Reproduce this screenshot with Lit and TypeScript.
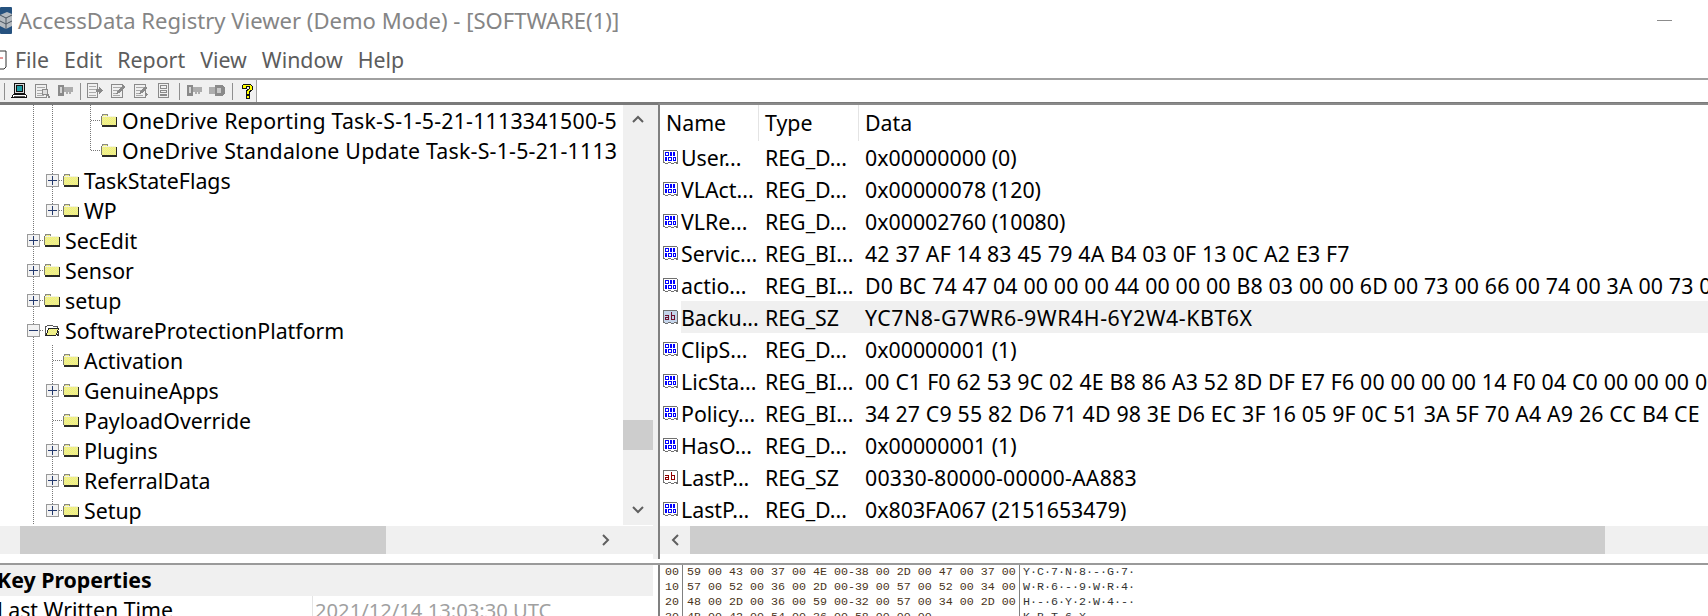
import { LitElement, html, css, svg } from "lit";
import { customElement } from "lit/decorators.js";

type Cell = "" | "v" | "t" | "l" | "p" | "m" | "pl";
const tree: { c: Cell[]; t: string; open?: boolean; wide?: boolean }[] = [
  { c: ["v", "v", "", "t"], t: "OneDrive Reporting Task-S-1-5-21-1113341500-5", wide: true },
  { c: ["v", "v", "", "l"], t: "OneDrive Standalone Update Task-S-1-5-21-1113", wide: true },
  { c: ["v", "p"], t: "TaskStateFlags" },
  { c: ["v", "pl"], t: "WP" },
  { c: ["p"], t: "SecEdit" },
  { c: ["p"], t: "Sensor" },
  { c: ["p"], t: "setup" },
  { c: ["m"], t: "SoftwareProtectionPlatform", open: true },
  { c: ["v", "t"], t: "Activation" },
  { c: ["v", "p"], t: "GenuineApps" },
  { c: ["v", "t"], t: "PayloadOverride" },
  { c: ["v", "p"], t: "Plugins" },
  { c: ["v", "p"], t: "ReferralData" },
  { c: ["v", "pl"], t: "Setup" },
];

const rows: { i: "b" | "s"; n: string; ty: string; d: string; sel?: boolean; ls?: number }[] = [
  { i: "b", n: "User...", ty: "REG_D...", d: "0x00000000 (0)" },
  { i: "b", n: "VLAct...", ty: "REG_D...", d: "0x00000078 (120)" },
  { i: "b", n: "VLRe...", ty: "REG_D...", d: "0x00002760 (10080)" },
  { i: "b", n: "Servic...", ty: "REG_BI...", d: "42 37 AF 14 83 45 79 4A B4 03 0F 13 0C A2 E3 F7", ls: 0.16 },
  { i: "b", n: "actio...", ty: "REG_BI...", d: "D0 BC 74 47 04 00 00 00 44 00 00 00 B8 03 00 00 6D 00 73 00 66 00 74 00 3A 00 73 00", ls: 0.16 },
  { i: "s", n: "Backu...", ty: "REG_SZ", d: "YC7N8-G7WR6-9WR4H-6Y2W4-KBT6X", sel: true, ls: 0.55 },
  { i: "b", n: "ClipS...", ty: "REG_D...", d: "0x00000001 (1)" },
  { i: "b", n: "LicSta...", ty: "REG_BI...", d: "00 C1 F0 62 53 9C 02 4E B8 86 A3 52 8D DF E7 F6 00 00 00 00 14 F0 04 C0 00 00 00 00", ls: 0.16 },
  { i: "b", n: "Policy...", ty: "REG_BI...", d: "34 27 C9 55 82 D6 71 4D 98 3E D6 EC 3F 16 05 9F 0C 51 3A 5F 70 A4 A9 26 CC B4 CE", ls: 0.16 },
  { i: "b", n: "HasO...", ty: "REG_D...", d: "0x00000001 (1)" },
  { i: "s", n: "LastP...", ty: "REG_SZ", d: "00330-80000-00000-AA883", ls: 0.19 },
  { i: "b", n: "LastP...", ty: "REG_D...", d: "0x803FA067 (2151653479)" },
];

const hex = [
  ["00", "59 00 43 00 37 00 4E 00-38 00 2D 00 47 00 37 00", "Y·C·7·N·8·-·G·7·"],
  ["10", "57 00 52 00 36 00 2D 00-39 00 57 00 52 00 34 00", "W·R·6·-·9·W·R·4·"],
  ["20", "48 00 2D 00 36 00 59 00-32 00 57 00 34 00 2D 00", "H·-·6·Y·2·W·4·-·"],
  ["30", "4B 00 42 00 54 00 36 00-58 00 00 00", "K·B·T·6·X···"],
];

const folder = (open?: boolean) => html`<svg class="folder" width="16" height="14" viewBox="0 0 16 14" shape-rendering="crispEdges">
  <defs><pattern id="dith" width="2" height="2" patternUnits="userSpaceOnUse"><rect width="2" height="2" fill="#ffff70"/><rect width="1" height="1" fill="#e0e0a0"/><rect x="1" y="1" width="1" height="1" fill="#e0e0a0"/></pattern></defs>
  ${open
    ? svg`<path d="M1 3h2l1-1h4l1 1h4v2H5L2 12H1z" fill="#fff" stroke="#555"/><path d="M5 5h10l-3 7H2z" fill="url(#dith)" stroke="#222"/><path d="M3 13h10l2-6v6z" fill="#333"/>`
    : svg`<path d="M1 3V2l1-1h4l1 2h8v9H1z" fill="url(#dith)"/><path d="M1 3V2l1-1h4l1 2h8" fill="none" stroke="#8a8a80"/><path d="M1 3h14v1H1z" fill="#f2f2e2"/><path d="M0 3h1v9H0z" fill="#7a7a70"/><path d="M1 12h15v1.5H1zM15 4h1v9h-1z" fill="#2a2a24"/>`}
</svg>`;

const regIcon = (k: "b" | "s", sel?: boolean) => html`<svg class="reg" width="16" height="17" viewBox="0 0 16 17" shape-rendering="crispEdges">
  <path d="M0.5 1.5h13l1 1v12l-2-1-3 1-3-1-3 1-3-1z" fill="${sel ? "#c4d4ea" : "#fff"}" stroke="#707070"/>
  ${k === "b"
    ? svg`<path fill="#0000ff" d="M2 3h4v1H2zM2 6h4v1H2zM2 4h1v2H2zM5 4h1v2H5zM7 3h2v4H7zM10 3h2v4h-2zM2 8h2v4H2zM5 8h4v1H5zM5 11h4v1H5zM5 9h1v2H5zM8 9h1v2H8zM10 8h3v1h-3zM10 11h3v1h-3zM10 9h1v2h-1zM12 9h1v2h-1z"/>`
    : svg`<path fill="${sel ? "#6e1030" : "#900000"}" d="M2 6h4v1H2zM2 8h3V7h1v4H2zM3 9v1h2V9zM8 3h1v3h3v5H8zM9 7v3h2V7z"/>`}
</svg>`;

const gray = "#8a8a8a";
const key = svg`<path d="M1 2h6v11H1z" fill="${gray}"/><path d="M7 4h9v5h-2v2h-2V9h-1v2H9V9H7z" fill="#adadad"/><path d="M3 4h2v6H3z" fill="#d4d4d4"/>`;
const docLines = svg`<path d="M1.5 1.5h11v13h-11z" fill="none" stroke="${gray}"/><path d="M3 4h8M3 7h5M3 10h5M3 12h7" stroke="#aaa"/>`;
const tools = [
  svg`<path d="M3.5 .5h10v10h-10z" fill="#d8d8d8" stroke="#111"/><path d="M5.5 2.5h6v6h-6z" fill="#20a0a8" stroke="#111"/><path d="M2.5 11.5h12l2 3H.5z" fill="#fff" stroke="#111"/><path d="M3 13h11v1H3z" fill="#555"/>`,
  svg`${docLines}<circle cx="11" cy="9" r="3" fill="#ddd" stroke="${gray}"/><path d="M13 11l3 4" stroke="${gray}" stroke-width="2"/>`,
  key,
  null,
  svg`<path d="M.5 .5h10v14H.5z" fill="none" stroke="${gray}"/><path d="M2 3h7M2 6h7M2 9h7M2 12h7" stroke="#aaa"/><path d="M9 6h3V3l4 4.5-4 4.5V9H9z" fill="${gray}"/>`,
  svg`${docLines}<path d="M7 9l6-7 2 2-6 6-3 1z" fill="${gray}"/>`,
  svg`${docLines}<path d="M7 9l5-6 2 2-5 5-3 1z" fill="${gray}"/><path d="M12 11h3M13.5 9.5v3" stroke="${gray}"/>`,
  svg`<path d="M2.5 .5h10v14h-10z" fill="none" stroke="${gray}"/><path d="M4.5 2.5h6v3h-6zM4.5 7.5h6v2h-6zM4.5 11.5h6v1h-6z" fill="none" stroke="${gray}"/>`,
  null,
  key,
  svg`<path d="M0 4h6v7H0z" fill="#adadad"/><path d="M6 2h7l3 3v6l-3 2H6z" fill="${gray}"/><path d="M8 5h4v5H8z" fill="#c8c8c8"/>`,
  null,
  svg`<path d="M3 3l2-2h6l2 2v4l-3 2v2H7V8l3-2V3H7v2H3z" fill="#ffff00" stroke="#111"/><path d="M7 12h3v3H7z" fill="#ffff00" stroke="#111"/>`,
];

const cell = (c: Cell) => html`<svg class="cell" width="19" height="30" viewBox="0 0 19 30" shape-rendering="crispEdges" stroke="#777" stroke-dasharray="1 1" fill="none">
  ${c === "v" || c === "t" ? svg`<path d="M9.5 0v30"/>` : ""}
  ${c === "l" || c === "pl" ? svg`<path d="M9.5 0v15"/>` : ""}
  ${c === "p" || c === "m" ? svg`<path d="M9.5 0v30"/>` : ""}
  ${c === "t" || c === "l" || c === "p" || c === "pl" || c === "m" ? svg`<path d="M9.5 15.5H19"/>` : ""}
  ${c === "p" || c === "pl" || c === "m"
    ? svg`<g stroke-dasharray="none"><rect x="3.5" y="9.5" width="12" height="12" fill="#f2f2f2" stroke="#9a9a9a"/><path d="M5 15.5h9" stroke="#23396e"/>${c !== "m" ? svg`<path d="M9.5 11v9" stroke="#23396e"/>` : ""}</g>`
    : ""}
</svg>`;

@customElement("app-root")
export class AppRoot extends LitElement {
  static styles = css`
    :host { display: block; width: 1708px; height: 616px; overflow: hidden; background: #fff; font-family: "Noto Sans", sans-serif; font-size: 21.33px; color: #000; }
    .app { display: flex; flex-direction: column; height: 616px; }
    .title { display: flex; align-items: center; height: 40px; flex: none; color: #858585; padding-right: 36px; font-size: 22.05px; }
    .title .logo { flex: none; margin-right: 6px; }
    .title .name { flex: 1; white-space: nowrap; }
    .min { width: 15px; height: 1px; background: #8c8c8c; }
    .menu { display: flex; align-items: center; height: 38px; box-sizing: border-box; padding-top: 1px; flex: none; color: #5c5c5c; font-size: 21.33px; }
    .menu .doc { flex: none; margin-right: 8px; }
    .menu span { margin-right: 15px; }
    .toolbar { display: flex; align-items: stretch; flex: none; height: 27px; background: #fff; border-top: 2px solid #a0a0a0; border-bottom: 3px solid #7a7a7a; box-sizing: border-box; }
    .tools { display: flex; align-items: center; height: 100%; width: 257px; padding-left: 4px; box-sizing: border-box; background: #f0f0f0; border-right: 1px solid #a0a0a0; }
    .tools i { flex: none; width: 1px; height: 17px; background: #8f8f8f; margin: 0 6px 0 0; }
    .tools svg { flex: none; margin-right: 7px; }
    .main { display: flex; height: 454px; flex: none; }
    .left { width: 653px; flex: none; display: flex; flex-direction: column; }
    .left-top { display: flex; height: 420px; flex: none; }
    .tree { width: 623px; flex: none; overflow: hidden; }
    .row { display: flex; align-items: center; height: 30px; white-space: nowrap; padding-left: 24px; }
    .row.wide { letter-spacing: 0.22px; }
    .cell { flex: none; display: block; }
    .folder { flex: none; margin: 0 5px 0 1px; }
    .vs { width: 30px; flex: none; background: #f0f0f0; display: flex; flex-direction: column; align-items: center; justify-content: space-between; }
    .vs .thumb { width: 100%; height: 30px; background: #cdcdcd; margin-top: auto; margin-bottom: 45px; }
    .arrow { flex: none; display: block; }
    .hs { display: flex; align-items: center; height: 28px; flex: none; background: #f0f0f0; margin-top: 1px; }
    .hs .thumb { height: 100%; background: #cdcdcd; flex: none; }
    .hs .gap { width: 20px; flex: none; }
    .hs .fill { flex: 1; }
    .hs .end { margin-right: 32px; }
    .split { width: 5px; flex: none; background: #f0f0f0; }
    .right { flex: 1; min-width: 0; border-left: 2px solid #808080; border-top: 2px solid #8a8a8a; margin-top: -2px; display: flex; flex-direction: column; overflow: hidden; }
    .head { display: flex; height: 36px; flex: none; align-items: center; }
    .head div { height: 100%; display: flex; align-items: center; box-sizing: border-box; padding-left: 6px; padding-bottom: 1px; border-right: 1px solid #e4e4e4; }
    .head .h1 { width: 99px; }
    .head .h2 { width: 100px; }
    .head .h3 { flex: 1; border: 0; }
    .lrow { display: flex; align-items: center; height: 32px; flex: none; white-space: nowrap; }
    .lrow .ic { flex: none; width: 18px; padding-left: 3px; height: 100%; display: flex; align-items: center; }
    .lrow .body { flex: 1; display: flex; align-items: center; height: 100%; min-width: 0; }
    .lrow.sel .body { background: #f0f0f0; }
    .c1 { width: 84px; flex: none; }
    .c2 { width: 100px; flex: none; }
    .bottom { display: flex; flex: 1; min-height: 0; border-top: 2px solid #9a9a9a; margin-top: 4px; }
    .props { width: 653px; flex: none; overflow: hidden; }
    .ph { height: 31px; box-sizing: border-box; padding-bottom: 2px; background: #f0f0f0; font-weight: 700; display: flex; align-items: center; margin-left: -3px; }
    .pr { display: flex; height: 21px; align-items: flex-start; white-space: nowrap; line-height: 28px; margin-left: -3px; }
    .pr .k { width: 315px; flex: none; border-right: 1px solid #e4e4e4; height: 100%; }
    .pr .v { padding-left: 2px; color: #a0a0a0; font-size: 20.2px; }
    .hex { flex: 1; border-left: 2px solid #808080; margin-left: 5px; font-family: "Liberation Mono", monospace; font-size: 11.67px; line-height: 15px; overflow: hidden; display: grid; grid-template-columns: 23px 337px 1fr; color: #4a3420; }
    .hex .off { border-right: 1px solid #808080; padding-left: 5px; white-space: pre; }
    .hex .bytes { border-right: 1px solid #808080; padding-left: 4px; white-space: pre; }
    .hex .ascii { padding-left: 3px; white-space: pre; color: #333; }
    .hex span { display: block; }
  `;

  render() {
    return html`<div class="app">
      <div class="title">
        <svg class="logo" width="12" height="27" viewBox="0 0 12 27"><rect width="12" height="27" rx="1" fill="#26527f"/><path d="M0 8l7-3 5 2v12l-6 3-6-3z" fill="#b4bac0"/><path d="M0 8l6 3 6-3M6 11v11M0 14l6 3 6-3" stroke="#4a5560" fill="none"/></svg>
        <span class="name">AccessData Registry Viewer (Demo Mode) - [SOFTWARE(1)]</span>
        <div class="min"></div>
      </div>
      <div class="menu">
        <svg class="doc" width="7" height="20" viewBox="0 0 7 20"><path d="M0 1h6v16l-2 2H0" fill="#fff" stroke="#333"/><path d="M0 8h3" stroke="#c33"/></svg>
        <span>File</span><span>Edit</span><span>Report</span><span>View</span><span>Window</span><span>Help</span>
      </div>
      <div class="toolbar">
        <div class="tools"><i></i>${tools.map((t) => (t ? html`<svg width="16" height="16" viewBox="0 0 16 16" shape-rendering="crispEdges">${t}</svg>` : html`<i></i>`))}</div>
      </div>
      <div class="main">
        <div class="left">
          <div class="left-top">
            <div class="tree">
              ${tree.map((r) => html`<div class="row ${r.wide ? "wide" : ""}">${r.c.map(cell)}${folder(r.open)}<span>${r.t}</span></div>`)}
            </div>
            <div class="vs">
              <svg class="arrow" width="14" height="30" viewBox="0 0 14 30"><path d="M2 17l5-5 5 5" fill="none" stroke="#5f5f5f" stroke-width="2"/></svg>
              <div class="thumb"></div>
              <svg class="arrow" width="14" height="30" viewBox="0 0 14 30"><path d="M2 12l5 5 5-5" fill="none" stroke="#5f5f5f" stroke-width="2"/></svg>
            </div>
          </div>
          <div class="hs">
            <div class="gap"></div>
            <div class="thumb" style="width:366px"></div>
            <div class="fill"></div>
            <svg class="arrow end" width="30" height="28" viewBox="0 0 30 28"><path d="M12 9l5 5-5 5" fill="none" stroke="#5f5f5f" stroke-width="2"/></svg>
          </div>
        </div>
        <div class="split"></div>
        <div class="right">
          <div class="head">
            <div class="h1">Name</div>
            <div class="h2">Type</div>
            <div class="h3">Data</div>
          </div>
          ${rows.map((r) => html`<div class="lrow ${r.sel ? "sel" : ""}">
            <div class="ic">${regIcon(r.i, r.sel)}</div>
            <div class="body"><span class="c1">${r.n}</span><span class="c2">${r.ty}</span><span style="letter-spacing:${r.ls ?? 0}px">${r.d}</span></div>
          </div>`)}
          <div class="hs">
            <svg class="arrow" width="30" height="28" viewBox="0 0 30 28"><path d="M18 9l-5 5 5 5" fill="none" stroke="#5f5f5f" stroke-width="2"/></svg>
            <div class="thumb" style="width:915px"></div>
          </div>
        </div>
      </div>
      <div class="bottom">
        <div class="props">
          <div class="ph">Key Properties</div>
          <div class="pr"><div class="k">Last Written Time</div><div class="v">2021/12/14 13:03:30 UTC</div></div>
        </div>
        <div class="hex">
          <div class="off">${hex.map((h) => html`<span>${h[0]}</span>`)}</div>
          <div class="bytes">${hex.map((h) => html`<span>${h[1]}</span>`)}</div>
          <div class="ascii">${hex.map((h) => html`<span>${h[2]}</span>`)}</div>
        </div>
      </div>
    </div>`;
  }
}
